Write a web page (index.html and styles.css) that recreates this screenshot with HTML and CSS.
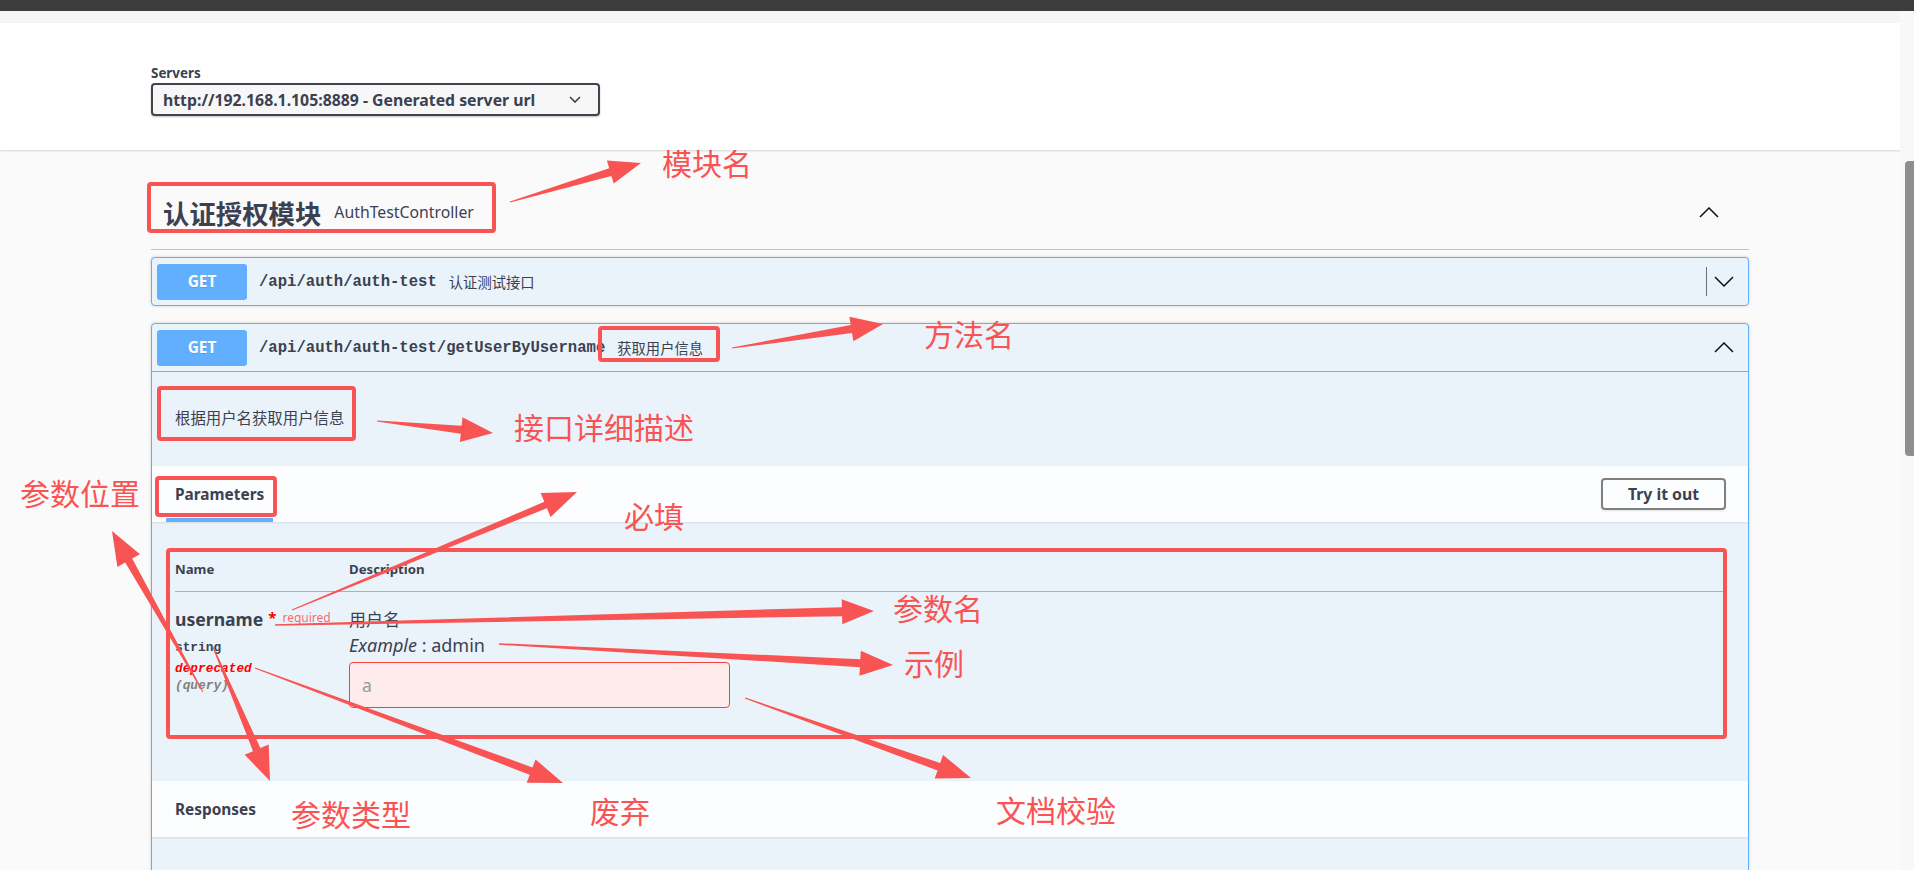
FILE: index.html
```html
<!DOCTYPE html>
<html lang="zh-CN">
<head>
    <meta charset="UTF-8">
    <meta name="viewport" content="width=device-width, initial-scale=1.0">
    <title>Swagger UI - 认证授权模块</title>
    <link rel="stylesheet" href="styles.css">
</head>
<body>
    <div class="topbar"></div>
    <div class="frame">
        <div class="page">
            <div class="band"></div>
            <section class="servers-bar">
                <div class="wrapper">
                    <div class="servers-label">Servers</div>
                    <div class="select">
                        <span>http://192.168.1.105:8889 - Generated server url</span>
                        <svg class="select-arrow" width="12" height="7" viewBox="0 0 12 7"><polyline points="1,1 6,6 11,1" fill="none" stroke="#3b4151" stroke-width="1.6"/></svg>
                    </div>
                </div>
            </section>

            <main class="wrapper">
                <!-- tag section -->
                <div class="tag-heading">
                    <h3 class="tag-title">
                        <span class="tag-name">认证授权模块</span>
                        <small class="tag-desc">AuthTestController</small>
                    </h3>
                    <svg class="chevron" width="20" height="11" viewBox="0 0 20 11"><polyline points="1,10 10,1 19,10" fill="none" stroke="#111" stroke-width="1.5"/></svg>
                </div>

                <div class="opblock">
                    <div class="summary">
                        <span class="method">GET</span>
                        <span class="path">/api/auth/auth-test</span>
                        <span class="summary-desc">认证测试接口</span>
                        <span class="summary-divider"></span>
                        <svg class="chevron" width="20" height="11" viewBox="0 0 20 11"><polyline points="1,1 10,10 19,1" fill="none" stroke="#111" stroke-width="1.5"/></svg>
                    </div>
                </div>

                <div class="opblock is-open">
                    <div class="summary">
                        <span class="method">GET</span>
                        <span class="path">/api/auth/auth-test/getUserByUsername</span>
                        <span class="summary-desc">获取用户信息</span>
                        <svg class="chevron push" width="20" height="11" viewBox="0 0 20 11"><polyline points="1,10 10,1 19,10" fill="none" stroke="#111" stroke-width="1.5"/></svg>
                    </div>

                    <div class="op-desc">根据用户名获取用户信息</div>

                    <div class="section-header">
                        <div class="tab">Parameters</div>
                        <button class="btn-try">Try it out</button>
                    </div>

                    <div class="params">
                        <div class="params-head">
                            <div class="col-name">Name</div>
                            <div class="col-desc">Description</div>
                        </div>
                        <div class="params-row">
                            <div class="col-name">
                                <div class="param-name">username<span class="req-star">*</span><span class="req-text">required</span></div>
                                <div class="param-type">string</div>
                                <div class="param-deprecated">deprecated</div>
                                <div class="param-in">(query)</div>
                            </div>
                            <div class="col-desc">
                                <div class="param-desc">用户名</div>
                                <div class="param-example"><i>Example</i> : admin</div>
                                <input class="param-input" type="text" placeholder="a">
                            </div>
                        </div>
                    </div>

                    <div class="section-header responses">
                        <div class="section-title">Responses</div>
                    </div>
                    <div class="responses-body"></div>
                </div>
            </main>
        </div>
        <div class="scrollbar"><div class="thumb"></div></div>
    </div>

    <!-- annotations drawn over the screenshot -->
    <svg class="notes" width="1914" height="870" viewBox="0 0 1914 870">
        <g class="note-boxes">
            <rect x="149" y="184" width="345" height="47" rx="2"/>
            <rect x="600" y="328" width="118" height="32" rx="2"/>
            <rect x="159" y="388" width="195" height="51" rx="2"/>
            <rect x="157" y="478" width="118" height="37" rx="2"/>
            <rect x="168" y="550" width="1557" height="187" rx="2"/>
        </g>
        <g class="note-arrows">
            <polygon points="510.1,202.5 611.4,175.9 613.7,183.6 641,163 606.9,160.6 609.2,168.3 509.9,201.5"/>
            <polygon points="732.1,348.5 852.0,333.0 853.4,341.3 883,324 849.4,316.7 850.8,325.0 731.9,347.5"/>
            <polygon points="376.9,421.5 460.8,433.7 459.9,442.1 493,433 462.5,417.3 461.6,425.7 377.1,420.5"/>
            <polygon points="292.2,610.5 546.9,508.2 550.6,517.0 577,492 540.6,493.0 544.3,501.8 291.8,609.5"/>
            <polygon points="203.4,691.8 132.2,558.6 140.0,554.2 112,531 117.4,567.0 125.2,562.6 202.6,692.2"/>
            <polygon points="212.5,647.2 253.0,751.3 244.7,754.8 270,781 268.7,744.6 260.4,748.1 213.5,646.8"/>
            <polygon points="275,625.8 842.1,616.2 842.3,624.2 874,611 841.7,599.2 841.9,607.2 275,624.2"/>
            <polygon points="499,644.8 859.9,667.2 859.4,675.7 893,665 860.8,650.7 860.3,659.2 499,643.2"/>
            <polygon points="744.8,698.5 937.6,770.5 934.7,778.5 971,778 943.1,754.9 940.2,762.9 745.2,697.5"/>
            <polygon points="254.8,668.5 529.7,774.8 526.7,782.8 563,783 535.5,759.4 532.5,767.4 255.2,667.5"/>
        </g>
        <g class="note-labels">
            <text x="662" y="175">模块名</text>
            <text x="924" y="346">方法名</text>
            <text x="514" y="439">接口详细描述</text>
            <text x="624" y="528">必填</text>
            <text x="20" y="505">参数位置</text>
            <text x="893" y="620">参数名</text>
            <text x="904" y="675">示例</text>
            <text x="291" y="826">参数类型</text>
            <text x="590" y="823">废弃</text>
            <text x="996" y="822">文档校验</text>
        </g>
    </svg>
</body>
</html>
```

FILE: styles.css
```css
* {
    margin: 0;
    padding: 0;
    box-sizing: border-box;
}

body {
    position: relative;
    height: 100vh;
    overflow: hidden;
    background: #fafafa;
    color: #3b4151;
    font-family: "Noto Sans", "Noto Sans CJK SC", sans-serif;
}

.topbar {
    height: 11px;
    background: #3c3c3c;
}

.frame {
    display: flex;
    height: calc(100vh - 11px);
}

.page {
    flex: 1;
    overflow: hidden;
    background: #fafafa;
}

.scrollbar {
    width: 14px;
    padding: 150px 0 0 5px;
    background: #f8f8f8;
}

.thumb {
    height: 295px;
    background: #8e8e8e;
    border-radius: 4px 0 0 4px;
}

.band {
    height: 12px;
    background: #f6f6f6;
}

.wrapper {
    width: 1598px;
    margin: 0 auto;
}

/* servers */
.servers-bar {
    position: relative;
    z-index: 1;
    height: 127px;
    padding-top: 42px;
    background: #fff;
    box-shadow: 0 1px 2px 0 rgba(0, 0, 0, 0.15);
}

.servers-label {
    font-size: 13.4px;
    font-weight: 700;
    line-height: 17px;
    margin-bottom: 1px;
}

.select {
    display: flex;
    align-items: center;
    justify-content: space-between;
    width: 449px;
    height: 33px;
    padding: 0 17px 0 10px;
    border: 2px solid #41444e;
    border-radius: 4px;
    background: #f7f7f7;
    box-shadow: 0 1px 2px 0 rgba(0, 0, 0, 0.25);
    font-size: 15.8px;
    font-weight: 700;
}

/* tag section */
.tag-heading {
    display: flex;
    align-items: center;
    justify-content: space-between;
    height: 75px;
    margin-top: 25px;
    padding: 0 30px 0 12px;
    border-bottom: 1px solid rgba(59, 65, 81, 0.3);
}

.tag-title {
    display: flex;
    align-items: center;
}

.tag-name {
    font-family: "Noto Sans CJK SC", sans-serif;
    font-size: 26.4px;
    font-weight: 700;
}

.tag-desc {
    margin-left: 13px;
    font-size: 15.8px;
    font-weight: 400;
}

/* operations */
.opblock {
    margin: 7px 0 17px;
    border: 1px solid #61affe;
    border-radius: 4px;
    background: #ebf3fa;
    box-shadow: 0 0 3px rgba(0, 0, 0, 0.19);
}

.is-open {
    margin-top: 0;
}

.summary {
    display: flex;
    align-items: center;
    height: 47px;
    padding: 0 14px 0 5px;
}

.is-open .summary {
    height: 48px;
    border-bottom: 1px solid #61affe;
}

.method {
    width: 90px;
    height: 36px;
    line-height: 36px;
    border-radius: 3px;
    background: #61affe;
    color: #fff;
    font-size: 15.4px;
    font-weight: 700;
    text-align: center;
    text-shadow: 0 1px 0 rgba(0, 0, 0, 0.1);
}

.path {
    margin-left: 12px;
    font-family: "Liberation Mono", monospace;
    font-size: 15.6px;
    font-weight: 700;
    color: #3b4151;
}

.summary-desc {
    margin-left: 12px;
    font-family: "Noto Sans CJK SC", sans-serif;
    font-size: 14.3px;
}

.summary-divider {
    width: 1px;
    height: 29px;
    margin-left: auto;
    margin-right: 7px;
    background: #6b6f78;
}

.push {
    margin-left: auto;
}

.op-desc {
    display: flex;
    align-items: center;
    height: 94px;
    padding: 0 0 4px 23px;
    font-family: "Noto Sans CJK SC", sans-serif;
    font-size: 15.4px;
}

.section-header {
    position: relative;
    display: flex;
    align-items: center;
    justify-content: space-between;
    height: 56px;
    padding: 0 22px 0 14px;
    background: rgba(255, 255, 255, 0.8);
    box-shadow: 0 1px 2px rgba(0, 0, 0, 0.1);
}

.tab {
    align-self: stretch;
    display: flex;
    align-items: center;
    padding: 4px 9px 0;
    border-bottom: 4px solid #61affe;
    font-size: 15.4px;
    font-weight: 700;
}

.btn-try {
    width: 125px;
    height: 32px;
    border: 2px solid #808080;
    border-radius: 4px;
    background: transparent;
    color: #3b4151;
    font-family: "Noto Sans", sans-serif;
    font-size: 15.8px;
    font-weight: 700;
    box-shadow: 0 1px 2px rgba(0, 0, 0, 0.1);
}

/* parameters table */
.params {
    height: 259px;
    padding: 36px 23px 0;
}

.params-head,
.params-row {
    display: grid;
    grid-template-columns: 174px 1fr;
}

.params-head {
    height: 34px;
    padding-bottom: 11px;
    border-bottom: 1px solid #aab2bf;
    font-size: 13.2px;
    font-weight: 700;
    line-height: 22px;
}

.params-row {
    padding-top: 15px;
}

.param-name {
    display: flex;
    align-items: baseline;
    font-size: 17.6px;
    font-weight: 700;
    line-height: 24px;
}

.req-star {
    margin-left: 5px;
    color: #f00;
    font-size: 15px;
    position: relative;
    top: -3px;
}

.req-text {
    margin-left: 6px;
    color: rgba(255, 0, 0, 0.6);
    font-size: 12px;
    font-weight: 400;
    position: relative;
    top: -4px;
}

.param-type,
.param-deprecated,
.param-in {
    font-family: "Liberation Mono", monospace;
    font-size: 12.8px;
}

.param-type {
    margin-top: 5px;
    line-height: 18px;
    font-weight: 700;
}

.param-deprecated {
    margin-top: 3px;
    line-height: 18px;
    color: #f00;
    font-weight: 700;
    font-style: italic;
}

.param-in {
    line-height: 16px;
    color: #808080;
    font-style: italic;
    font-weight: 700;
}

.param-desc {
    font-family: "Noto Sans CJK SC", sans-serif;
    font-size: 17px;
    line-height: 24px;
}

.param-example {
    margin-top: 2px;
    font-size: 18px;
    line-height: 24px;
}

.param-input {
    display: block;
    width: 381px;
    height: 46px;
    margin-top: 5px;
    padding: 0 12px;
    border: 1px solid #f93e3e;
    border-radius: 4px;
    background: #feebeb;
    font-family: "Noto Sans", sans-serif;
    font-size: 17.6px;
    color: #3b4151;
}

.param-input::placeholder {
    color: #9a9a9a;
}

.responses {
    padding-left: 23px;
}

.section-title {
    font-size: 15.4px;
    font-weight: 700;
}

.responses-body {
    height: 120px;
}

/* annotation overlay */
.notes {
    position: absolute;
    top: 0;
    left: 0;
    pointer-events: none;
}

.note-boxes rect {
    fill: none;
    stroke: #f95454;
    stroke-width: 4;
}

.note-arrows polygon {
    fill: #f95454;
}

.note-labels text {
    fill: #f95454;
    font-family: "Noto Sans CJK SC", sans-serif;
    font-size: 30px;
}
```
